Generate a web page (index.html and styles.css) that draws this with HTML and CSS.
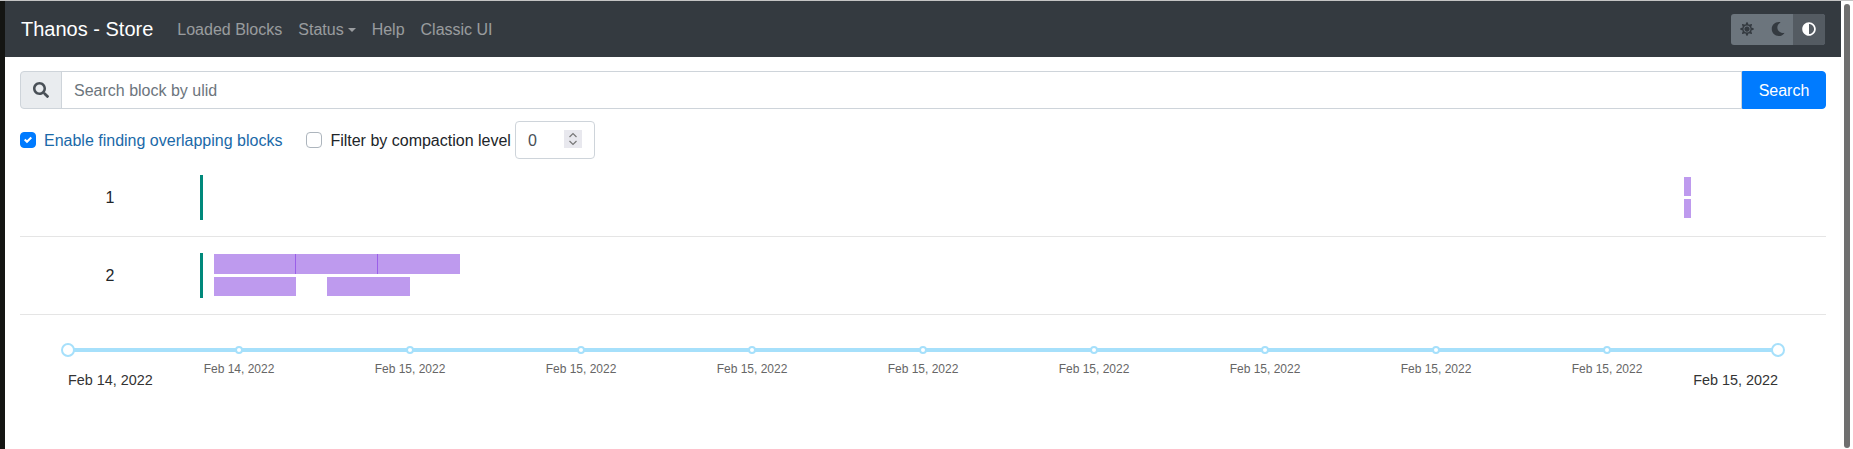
FILE: index.html
```html
<!DOCTYPE html>
<html lang="en">
<head>
<meta charset="utf-8">
<title>Thanos - Store</title>
<link rel="stylesheet" href="styles.css">
</head>
<body>
<div class="desktop-edge"></div>
<div class="app">
  <nav class="navbar">
    <a class="brand">Thanos - Store</a>
    <a class="nav-link">Loaded Blocks</a>
    <a class="nav-link">Status<span class="caret"></span></a>
    <a class="nav-link">Help</a>
    <a class="nav-link">Classic UI</a>
    <div class="theme-toggle">
      <span class="theme-btn"><svg class="icon" viewBox="0 0 512 512"><path d="M256 160c-52.9 0-96 43.1-96 96s43.1 96 96 96 96-43.1 96-96-43.1-96-96-96zm246.4 80.5l-94.7-47.3 33.5-100.4c4.5-13.6-8.4-26.5-21.9-21.9l-100.4 33.5-47.4-94.8c-6.4-12.8-24.6-12.8-31 0l-47.3 94.7L92.7 70.8c-13.6-4.5-26.5 8.4-21.9 21.9l33.5 100.4-94.7 47.4c-12.8 6.4-12.8 24.6 0 31l94.7 47.3-33.5 100.5c-4.5 13.6 8.4 26.5 21.9 21.9l100.4-33.5 47.3 94.7c6.4 12.8 24.6 12.8 31 0l47.3-94.7 100.4 33.5c13.6 4.5 26.5-8.4 21.9-21.9l-33.5-100.4 94.7-47.3c13-6.5 13-24.7.2-31.1zm-155.9 106c-49.9 49.9-131.1 49.9-181 0-49.9-49.9-49.9-131.1 0-181 49.9-49.9 131.1-49.9 181 0 49.9 49.9 49.9 131.1 0 181z"/></svg></span>
      <span class="theme-btn"><svg class="icon" viewBox="0 0 512 512"><path d="M283.211 512c78.962 0 151.079-35.925 198.857-94.792 7.068-8.708-.639-21.43-11.562-19.35-124.203 23.654-238.262-71.576-238.262-196.954 0-72.222 38.662-138.635 101.498-174.394 9.686-5.512 7.25-20.197-3.756-22.23A258.156 258.156 0 0 0 283.211 0c-141.309 0-256 114.511-256 256 0 141.309 114.511 256 256 256z"/></svg></span>
      <span class="theme-btn active"><svg class="icon" viewBox="0 0 512 512"><path d="M8 256c0 136.966 111.033 248 248 248s248-111.034 248-248S392.966 8 256 8 8 119.033 8 256zm248 184V72c101.705 0 184 82.311 184 184 0 101.705-82.311 184-184 184z"/></svg></span>
    </div>
  </nav>
  <main class="content">
    <div class="search-group">
      <span class="search-addon"><svg class="search-icon" viewBox="0 0 512 512"><path d="M505 442.7L405.3 343c-4.5-4.5-10.6-7-17-7H372c27.6-35.3 44-79.7 44-128C416 93.1 322.9 0 208 0S0 93.1 0 208s93.1 208 208 208c48.3 0 92.7-16.4 128-44v16.3c0 6.4 2.5 12.5 7 17l99.7 99.7c9.4 9.4 24.6 9.4 33.9 0l28.3-28.3c9.4-9.4 9.4-24.6.1-34zM208 336c-70.7 0-128-57.2-128-128 0-70.7 57.2-128 128-128 70.7 0 128 57.2 128 128 0 70.7-57.2 128-128 128z"/></svg></span>
      <input class="search-input" type="text" placeholder="Search block by ulid">
      <button class="search-btn" type="button">Search</button>
    </div>
    <div class="filters">
      <label class="check-label overlap"><input class="check" type="checkbox" checked>Enable finding overlapping blocks</label>
      <label class="check-label compaction"><input class="check" type="checkbox">Filter by compaction level</label>
      <input class="level-input" type="number" value="0">
    </div>
    <section class="row">
      <div class="row-label">1</div>
      <div class="chart">
        <div class="block" style="left:1481px;width:7px;top:2px;height:19px"></div>
        <div class="block" style="left:1481px;width:7px;top:24px;height:19px"></div>
      </div>
    </section>
    <section class="row">
      <div class="row-label">2</div>
      <div class="chart">
        <div class="block" style="left:11px;width:81px;top:1px;height:20px"></div>
        <div class="block split" style="left:92px;width:82px;top:1px;height:20px"></div>
        <div class="block split" style="left:174px;width:83px;top:1px;height:20px"></div>
        <div class="block" style="left:11px;width:82px;top:24px;height:19px"></div>
        <div class="block" style="left:124px;width:83px;top:24px;height:19px"></div>
      </div>
    </section>
    <section class="timeline">
      <div class="slider">
        <span class="handle"></span>
        <div class="mark"><span class="dot"></span><span class="mark-label">Feb 14, 2022</span></div>
        <div class="mark"><span class="dot"></span><span class="mark-label">Feb 15, 2022</span></div>
        <div class="mark"><span class="dot"></span><span class="mark-label">Feb 15, 2022</span></div>
        <div class="mark"><span class="dot"></span><span class="mark-label">Feb 15, 2022</span></div>
        <div class="mark"><span class="dot"></span><span class="mark-label">Feb 15, 2022</span></div>
        <div class="mark"><span class="dot"></span><span class="mark-label">Feb 15, 2022</span></div>
        <div class="mark"><span class="dot"></span><span class="mark-label">Feb 15, 2022</span></div>
        <div class="mark"><span class="dot"></span><span class="mark-label">Feb 15, 2022</span></div>
        <div class="mark"><span class="dot"></span><span class="mark-label">Feb 15, 2022</span></div>
        <span class="handle"></span>
      </div>
      <div class="range-labels">
        <span>Feb 14, 2022</span>
        <span>Feb 15, 2022</span>
      </div>
    </section>
  </main>
</div>
<div class="scroll-gutter"><div class="scroll-thumb"></div></div>
</body>
</html>
```
FILE: styles.css
```css
* { box-sizing: border-box; }
html, body { height: 100%; }
body {
  margin: 0;
  height: 449px;
  overflow: hidden;
  display: grid;
  grid-template-columns: 5px 1fr 12px;
  background: #fff;
  color: #212529;
  font: 16px/1.5 "Liberation Sans", Arial, sans-serif;
  border-top: 1px solid #c4c4c4;
}
.desktop-edge { background: #141513; }
.app { min-width: 0; }
.navbar {
  height: 56px;
  background: #343a40;
  display: flex;
  align-items: center;
  padding: 0 16px;
}
.brand { color: #fff; font-size: 20px; margin-right: 16px; }
.nav-link { color: rgba(255, 255, 255, .5); padding: 1px 8px 0; }
.caret {
  display: inline-block;
  margin-left: 4px;
  vertical-align: 3px;
  border-top: 4.8px solid;
  border-left: 4.8px solid transparent;
  border-right: 4.8px solid transparent;
}
.theme-toggle {
  margin-left: auto;
  display: flex;
  height: 31px;
  border-radius: 3px;
  overflow: hidden;
  background: #6c757d;
}
.theme-btn {
  width: 31px;
  display: flex;
  align-items: center;
  justify-content: center;
  color: #343a40;
}
.theme-btn.active { background: #545b62; color: #fff; width: 32px; }
.icon { width: 14px; height: 14px; fill: currentColor; }
.content { padding: 14px 15px 0; }
.search-group { display: flex; height: 38px; }
.search-addon {
  width: 42px;
  display: flex;
  align-items: center;
  justify-content: center;
  background: #e9ecef;
  border: 1px solid #ced4da;
  border-radius: 4px 0 0 4px;
}
.search-icon { width: 16px; height: 16px; fill: #495057; }
.search-input {
  flex: 1;
  min-width: 0;
  margin-left: -1px;
  padding: 7px 12px 5px;
  border: 1px solid #ced4da;
  font: inherit;
  color: #495057;
  outline: none;
}
.search-input::placeholder { color: #6c757d; opacity: 1; }
.search-btn {
  width: 84px;
  padding: 2px 0 0;
  border: 1px solid #007bff;
  border-radius: 0 4px 4px 0;
  background: #007bff;
  color: #fff;
  font: inherit;
}
.filters { display: flex; align-items: center; height: 38px; margin-top: 12px; }
.check-label { display: flex; align-items: center; gap: 8px; padding-top: 2px; }
.overlap { color: #1a69a8; margin-right: 24px; }
.compaction { margin-right: 4px; }
.check {
  appearance: none;
  width: 16px;
  height: 16px;
  margin: -2px 0 0;
  border: 1px solid #adb5bd;
  border-radius: 4px;
  background: #fff center / 8px 8px no-repeat;
}
.check:checked {
  border-color: #007bff;
  background-color: #007bff;
  background-image: url("data:image/svg+xml,%3csvg xmlns='http://www.w3.org/2000/svg' width='8' height='8' viewBox='0 0 8 8'%3e%3cpath fill='%23fff' d='M6.564.75l-3.59 3.612-1.538-1.55L0 4.26l2.974 2.99L8 2.193z'/%3e%3c/svg%3e");
}
.level-input {
  width: 80px;
  height: 38px;
  padding: 7px 12px 5px;
  border: 1px solid #ced4da;
  border-radius: 4px;
  font: inherit;
  color: #495057;
  outline: none;
}
.level-input::-webkit-inner-spin-button {
  appearance: none;
  opacity: 1;
  width: 18px;
  height: 18px;
  margin-top: -2px;
  background: #e8e8ee url("data:image/svg+xml,%3csvg xmlns='http://www.w3.org/2000/svg' width='18' height='18' viewBox='0 0 18 18'%3e%3cpath fill='none' stroke='%23777' stroke-width='1.2' d='M5.5 7 9 3.5 12.5 7M5.5 11 9 14.5 12.5 11'/%3e%3c/svg%3e") center no-repeat;
}
.row {
  height: 78px;
  display: flex;
  align-items: center;
  border-bottom: 1px solid #e5e5e5;
}
.row-label { width: 180px; text-align: center; }
.chart {
  position: relative;
  flex: 1;
  height: 45px;
  border-left: 3px solid #00897b;
}
.block { position: absolute; background: #be9aee; }
.block.split { border-left: 1px solid #9a5fe8; }
.timeline { padding: 28px 48px 0; }
.slider {
  height: 14px;
  display: flex;
  justify-content: space-between;
  align-items: center;
  background: linear-gradient(#a6e0fb, #a6e0fb) center / 100% 4px no-repeat;
}
.handle {
  flex: none;
  width: 14px;
  height: 14px;
  margin: 0 -7px;
  border: 2px solid #a6e0fb;
  border-radius: 50%;
  background: #fff;
}
.mark {
  width: 0;
  height: 8px;
  display: flex;
  flex-direction: column;
  align-items: center;
}
.dot {
  flex: none;
  width: 8px;
  height: 8px;
  border: 2px solid #a6e0fb;
  border-radius: 50%;
  background: #fff;
}
.mark-label {
  flex: none;
  margin-top: 8px;
  font-size: 12px;
  line-height: 14px;
  color: #666;
  white-space: nowrap;
}
.range-labels {
  display: flex;
  justify-content: space-between;
  margin-top: 14px;
  font-size: 14.4px;
  line-height: 18px;
  color: #333;
}
.scroll-gutter { padding: 3px 0 1px 3px; }
.scroll-thumb { width: 6px; height: 444px; background: #6f6f6f; border-radius: 3px; }
```
